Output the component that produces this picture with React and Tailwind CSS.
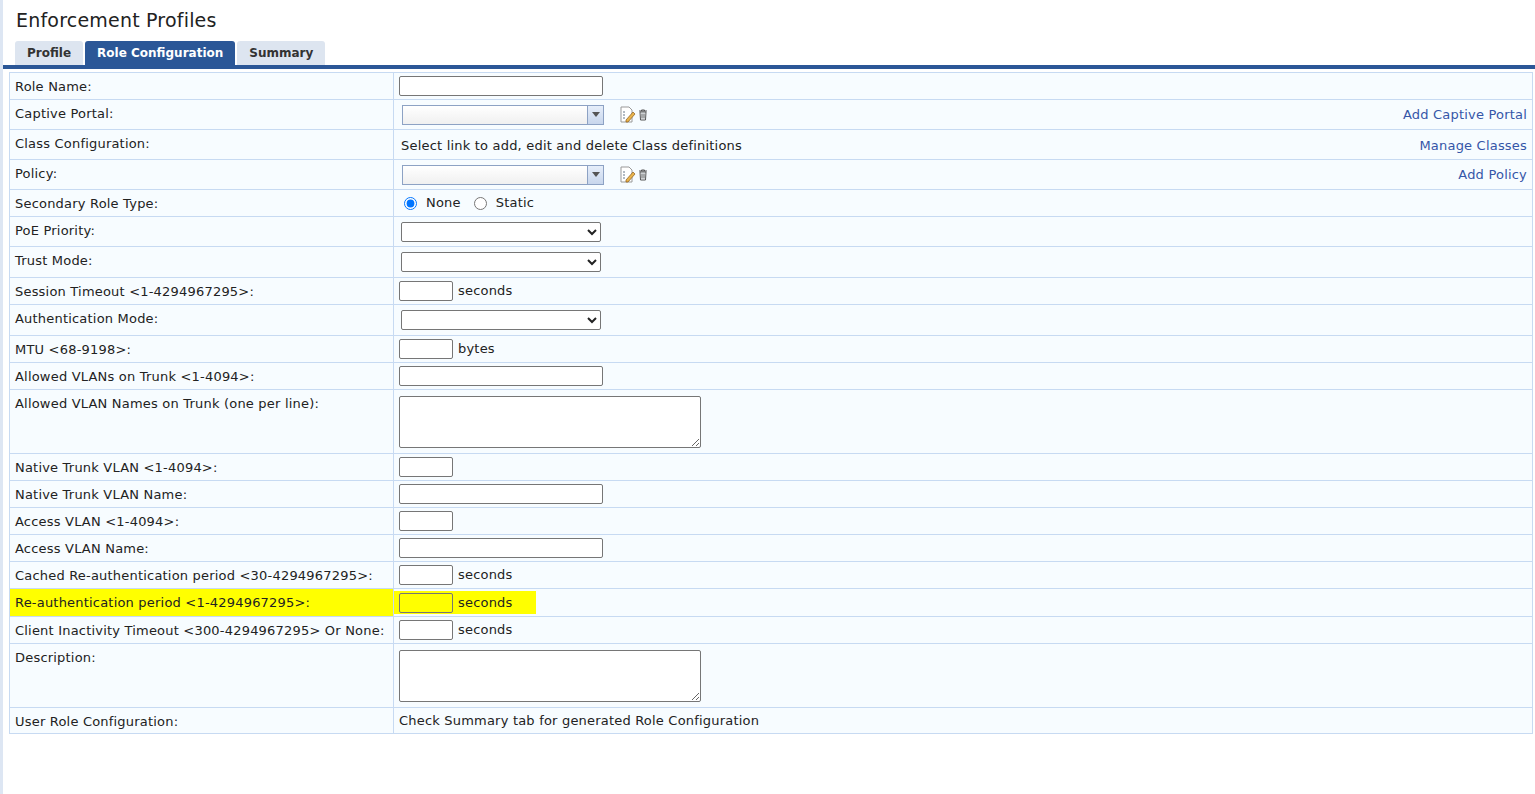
import React from 'react';

const Input = ({ w = 'w-[204px]', bg = 'bg-white' }) => (
  <input className={`${w} h-[20px] border border-[#767676] rounded-[2px] ${bg} align-middle`} />
);

const Select = () => (
  <select className="w-[200px] h-[20px] border border-[#767676] rounded-[2px] bg-white text-[13px] ml-[2px]">
    <option></option>
  </select>
);

const Combo = () => (
  <div className="flex items-center gap-[6px] ml-[3px]">
    <div className="flex w-[202px] h-[20px] border border-[#8da2c4] bg-gradient-to-b from-white to-[#f0f0f0]">
      <div className="flex-1" />
      <div className="w-[16px] border-l border-[#8da2c4] bg-gradient-to-b from-[#e6eefa] to-[#c8d6ec] flex items-center justify-center">
        <svg width="8" height="5" viewBox="0 0 8 5"><path d="M0 0h8L4 5z" fill="#555" /></svg>
      </div>
    </div>
    <svg width="18" height="18" viewBox="0 0 18 18" className="ml-[8px]">
      <path d="M3 1h8l3 3v12H3z" fill="#fff" stroke="#999" />
      <path d="M5 6h2M5 9h2M5 12h2" stroke="#678" />
      <path d="M8 14l7-8 2 2-7 8-2 0z" fill="#e9b44c" stroke="#8a5a1a" strokeWidth="0.7" />
    </svg>
    <svg width="10" height="12" viewBox="0 0 10 12" className="-ml-[4px]">
      <path d="M1 2h8M3.5 2V1h3v1M2 3h6l-.5 8h-5z" fill="none" stroke="#555" />
      <path d="M4 4.5v5M6 4.5v5" stroke="#555" />
    </svg>
  </div>
);

const Textarea = () => (
  <textarea className="w-[302px] h-[52px] border border-[#767676] rounded-[2px] bg-white align-middle block" />
);

const Unit = ({ children }) => (
  <div className="flex items-center gap-[5px]">
    <Input w="w-[54px]" />
    <span>{children}</span>
  </div>
);

const Link = ({ children }) => <span className="text-[#3556a8] ml-auto">{children}</span>;

const rows = [
  ['Role Name:', <Input />, 'h-[27px]'],
  ['Captive Portal:', <div className="flex items-center w-full"><Combo /><Link>Add Captive Portal</Link></div>, 'h-[30px]'],
  ['Class Configuration:', <div className="flex items-center w-full pl-[2px] pt-[2px]"><span>Select link to add, edit and delete Class definitions</span><Link>Manage Classes</Link></div>, 'h-[30px]'],
  ['Policy:', <div className="flex items-center w-full"><Combo /><Link>Add Policy</Link></div>, 'h-[30px]'],
  ['Secondary Role Type:', (
    <div className="flex items-center gap-[9px] pl-[5px]">
      <input type="radio" defaultChecked name="srt" className="w-[13px] h-[13px] accent-[#0075ff]" />
      <span className="mr-[4px]">None</span>
      <input type="radio" name="srt" className="w-[13px] h-[13px]" />
      <span>Static</span>
    </div>
  ), 'h-[27px]'],
  ['PoE Priority:', <Select />, 'h-[30px]'],
  ['Trust Mode:', <Select />, 'h-[31px]'],
  ['Session Timeout <1-4294967295>:', <Unit>seconds</Unit>, 'h-[27px]'],
  ['Authentication Mode:', <Select />, 'h-[31px]'],
  ['MTU <68-9198>:', <Unit>bytes</Unit>, 'h-[27px]'],
  ['Allowed VLANs on Trunk <1-4094>:', <Input />, 'h-[27px]'],
  ['Allowed VLAN Names on Trunk (one per line):', <Textarea />, 'h-[64px]'],
  ['Native Trunk VLAN <1-4094>:', <Input w="w-[54px]" />, 'h-[27px]'],
  ['Native Trunk VLAN Name:', <Input />, 'h-[27px]'],
  ['Access VLAN <1-4094>:', <Input w="w-[54px]" />, 'h-[27px]'],
  ['Access VLAN Name:', <Input />, 'h-[27px]'],
  ['Cached Re-authentication period <30-4294967295>:', <Unit>seconds</Unit>, 'h-[27px]'],
  ['Re-authentication period <1-4294967295>:', (
    <div className="flex items-center gap-[5px] bg-[#ffff00] w-[142px] -ml-[5px] pl-[5px] h-[23px]">
      <Input w="w-[54px]" bg="bg-[#ffff00]" />
      <span>seconds</span>
    </div>
  ), 'h-[27px]', true],
  ['Client Inactivity Timeout <300-4294967295> Or None:', <Unit>seconds</Unit>, 'h-[27px]'],
  ['Description:', <Textarea />, 'h-[64px]'],
  ['User Role Configuration:', <span>Check Summary tab for generated Role Configuration</span>, 'h-[26px]'],
];

export default function App() {
  return (
    <div className="min-h-[794px] bg-white border-l-[3px] border-[#dde6f3] text-[13px] text-[#222] tracking-[0.2px]" style={{ fontFamily: '"DejaVu Sans", Verdana, sans-serif' }}>
      <h1 className="text-[19px] pl-[13px] pt-[6px] h-[41px] text-[#222]">Enforcement Profiles</h1>
      <div className="flex pl-[12px] gap-[2px] border-b-[4px] border-[#2b5797] text-[12px] tracking-normal">
        <div className="px-[12px] h-[24px] flex items-center font-bold bg-[#dde5f0] text-[#333] rounded-t-[3px]">Profile</div>
        <div className="px-[12px] h-[24px] flex items-center font-bold bg-[#2b5797] text-white rounded-t-[3px]">Role Configuration</div>
        <div className="px-[12px] h-[24px] flex items-center font-bold bg-[#dde5f0] text-[#333] rounded-t-[3px]">Summary</div>
      </div>
      <div className="pl-[6px] pr-[2px] pt-[3px]">
        <table className="w-full border-collapse border border-[#c7daf2]">
          <tbody>
            {rows.map(([label, value, h, hl], i) => (
              <tr key={i} className={`${h} bg-[#f7fcff]`}>
                <td className={`w-[384px] border border-[#c7daf2] px-[5px] align-top pt-[4px] ${hl ? 'bg-[#ffff00]' : ''}`}>{label}</td>
                <td className="border border-[#c7daf2] px-[5px] py-[2px] align-middle">
                  <div className="flex items-center">{value}</div>
                </td>
              </tr>
            ))}
          </tbody>
        </table>
      </div>
    </div>
  );
}
